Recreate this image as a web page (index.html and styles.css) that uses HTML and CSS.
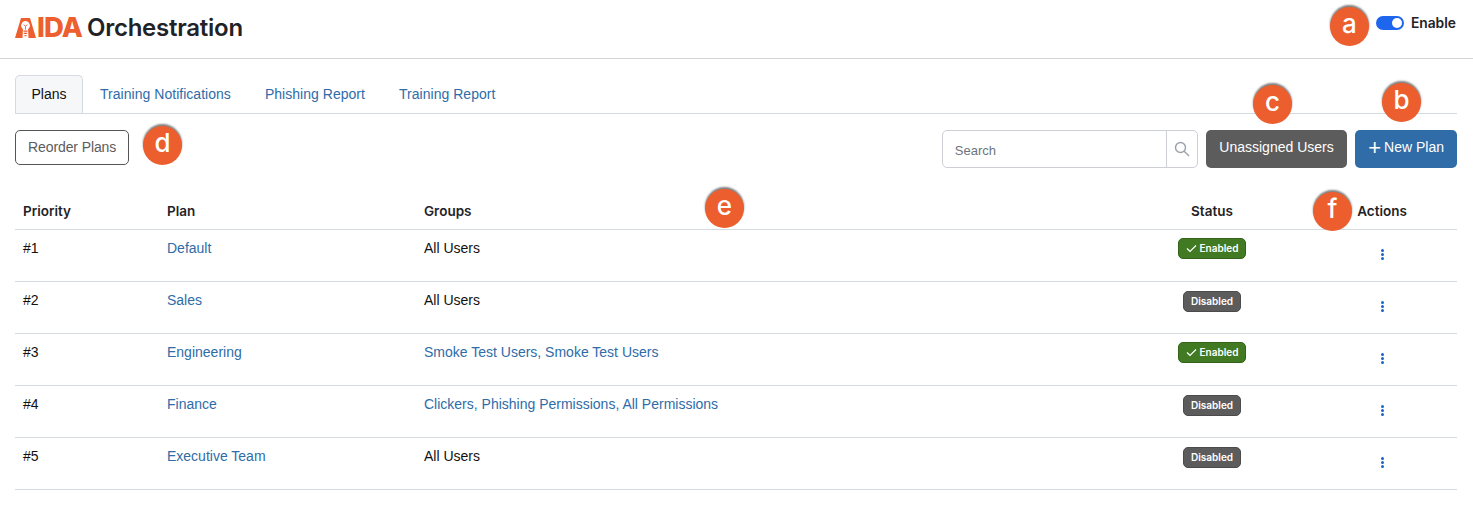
FILE: index.html
```html
<!DOCTYPE html>
<html lang="en">
<head>
    <meta charset="UTF-8">
    <title>AIDA Orchestration</title>
    <link rel="stylesheet" href="styles.css">
</head>
<body>
<div class="header">
    <div class="brand">
        <svg class="logo-mark" width="21" height="20" viewBox="0 0 21 20">
            <path fill="#ee5f2f" d="M6 0 H15 L21 20 H0 Z"/>
            <circle cx="10.500" cy="7.500" r="4.400" fill="#fff"/>
            <path fill="#fff" d="M8 10 H13 L13.500 20 H7.500 Z"/>
            <path fill="none" stroke="#ee5f2f" stroke-width="0.900" d="M8.800 6.500 L10.500 8.500 L12.200 6.500 M10.500 8.500 V11.500"/>
            <path fill="#ee5f2f" d="M8.500 12.500 H12.500 V13.700 H8.500 Z M8.800 14.800 H12.200 V16 H8.800 Z M9.500 17 H11.500 V18.200 H9.500 Z"/>
        </svg>
        <span class="logo-text">IDA</span>
        <span class="brand-name">Orchestration</span>
    </div>
    <div class="header-right">
        <span class="callout callout-a">a</span>
        <span class="switch"></span>
        <span class="switch-label">Enable</span>
    </div>
</div>

<div class="content">
    <div class="tabs">
        <a href="#" class="tab active">Plans</a>
        <a href="#" class="tab">Training Notifications</a>
        <a href="#" class="tab">Phishing Report</a>
        <a href="#" class="tab">Training Report</a>
        <span class="callout callout-c">c</span>
        <span class="callout callout-b">b</span>
    </div>

    <div class="toolbar">
        <div class="toolbar-left">
            <a href="#" class="btn btn-outline">Reorder Plans</a>
            <span class="callout callout-d">d</span>
        </div>
        <div class="toolbar-right">
            <div class="search">
                <input type="text" placeholder="Search">
                <span class="search-btn">
                    <svg width="16" height="16" viewBox="0 0 16 16" fill="none" stroke="#9aa1a8" stroke-width="1.400">
                        <circle cx="6.500" cy="6.500" r="5"/>
                        <path d="M10.200 10.200 L15 15"/>
                    </svg>
                </span>
            </div>
            <a href="#" class="btn btn-grey">Unassigned Users</a>
            <a href="#" class="btn btn-blue"><span class="plus">+</span>New Plan</a>
        </div>
    </div>

    <div class="table-wrap">
        <span class="callout callout-e">e</span>
        <span class="callout callout-f">f</span>
        <table>
            <thead>
                <tr>
                    <th class="col-priority">Priority</th>
                    <th class="col-plan">Plan</th>
                    <th>Groups</th>
                    <th class="col-status">Status</th>
                    <th class="col-actions">Actions</th>
                </tr>
            </thead>
            <tbody>
                <tr>
                    <td>#1</td>
                    <td><a href="#">Default</a></td>
                    <td>All Users</td>
                    <td class="col-status"><span class="badge badge-on"><svg width="11" height="9" viewBox="0 0 11 9" fill="none" stroke="#fff" stroke-width="1.200"><path d="M1 4.500 L4 7.500 L10 1.500"/></svg>Enabled</span></td>
                    <td class="col-actions"><span class="dots"><i></i><i></i><i></i></span></td>
                </tr>
                <tr>
                    <td>#2</td>
                    <td><a href="#">Sales</a></td>
                    <td>All Users</td>
                    <td class="col-status"><span class="badge badge-off">Disabled</span></td>
                    <td class="col-actions"><span class="dots"><i></i><i></i><i></i></span></td>
                </tr>
                <tr>
                    <td>#3</td>
                    <td><a href="#">Engineering</a></td>
                    <td><a href="#">Smoke Test Users, Smoke Test Users</a></td>
                    <td class="col-status"><span class="badge badge-on"><svg width="11" height="9" viewBox="0 0 11 9" fill="none" stroke="#fff" stroke-width="1.200"><path d="M1 4.500 L4 7.500 L10 1.500"/></svg>Enabled</span></td>
                    <td class="col-actions"><span class="dots"><i></i><i></i><i></i></span></td>
                </tr>
                <tr>
                    <td>#4</td>
                    <td><a href="#">Finance</a></td>
                    <td><a href="#">Clickers, Phishing Permissions, All Permissions</a></td>
                    <td class="col-status"><span class="badge badge-off">Disabled</span></td>
                    <td class="col-actions"><span class="dots"><i></i><i></i><i></i></span></td>
                </tr>
                <tr>
                    <td>#5</td>
                    <td><a href="#">Executive Team</a></td>
                    <td>All Users</td>
                    <td class="col-status"><span class="badge badge-off">Disabled</span></td>
                    <td class="col-actions"><span class="dots"><i></i><i></i><i></i></span></td>
                </tr>
            </tbody>
        </table>
    </div>
</div>
</body>
</html>
```

FILE: styles.css
```css
body {
    font-family: "Liberation Sans", Arial, sans-serif;
    font-size: 14px;
    color: #111;
    background-color: #fff;
    margin: 0;
}
a {
    color: #2f6ca8;
    text-decoration: none;
}
.header {
    height: 58px;
    padding: 0 17px 0 15px;
    border-bottom: 1px solid #d4d4d4;
    display: flex;
    justify-content: space-between;
    align-items: center;
}
.brand {
    display: flex;
    align-items: center;
    margin-bottom: 4px;
}
.logo-mark {
    margin-top: 2px;
}
.logo-text {
    font-family: Inter, sans-serif;
    font-size: 27.500px;
    font-weight: 800;
    letter-spacing: -0.9px;
    line-height: 24px;
    color: #ee5f2f;
    margin-left: 1px;
    margin-right: 5px;
}
.brand-name {
    font-family: Inter, sans-serif;
    font-size: 24px;
    font-weight: 600;
    letter-spacing: -0.25px;
    color: #1f2327;
}
.header-right {
    display: flex;
    align-items: center;
    position: relative;
    margin-bottom: 13px;
}
.switch {
    width: 28px;
    height: 14px;
    border-radius: 7px;
    background: #1f66ee;
    position: relative;
    margin-right: 7px;
}
.switch::after {
    content: "";
    position: absolute;
    right: 2px;
    top: 2px;
    width: 10px;
    height: 10px;
    border-radius: 50%;
    background: #fff;
}
.switch-label {
    font-family: Inter, sans-serif;
    font-size: 13.800px;
    font-weight: 600;
    color: #1f2327;
}
.callout {
    position: absolute;
    width: 39px;
    height: 39px;
    border-radius: 50%;
    background: #ec5e2e;
    box-shadow: 0 -2px 2px rgba(0, 0, 0, 0.5);
    color: #fff;
    font-family: Inter, sans-serif;
    font-size: 26px;
    font-weight: 500;
    line-height: 34px;
    text-align: center;
}
.callout-a { left: -46px; top: -8px; }
.callout-b { right: 36px; top: 8px; }
.callout-c { right: 165px; top: 10px; }
.callout-d { left: 128px; top: -4px; }
.callout-e { left: 690px; top: -3px; }
.callout-f { left: 1298px; top: 0; }
.content {
    padding: 16px 16px 0 15px;
}
.tabs {
    display: flex;
    height: 38px;
    border-bottom: 1px solid #d5dae0;
    position: relative;
}
.tab {
    padding: 11px 17px 0;
    line-height: 17px;
    font-size: 14px;
    letter-spacing: 0.03px;
}
.tab.active {
    color: #111;
    background: #f6f7f9;
    border: 1px solid #d5dae0;
    border-bottom: 0;
    border-radius: 5px 5px 0 0;
    padding: 10px 15.500px 0;
    letter-spacing: 0;
}
.toolbar {
    display: flex;
    justify-content: space-between;
    align-items: flex-start;
    margin-top: 16px;
}
.toolbar-left {
    position: relative;
}
.toolbar-right {
    display: flex;
    gap: 8px;
}
.btn {
    display: inline-block;
    border-radius: 5px;
    font-size: 14px;
    line-height: 17px;
}
.btn-outline {
    border: 1px solid #555;
    color: #5c5c5c;
    padding: 8px 12px;
    letter-spacing: -0.1px;
}
.btn-grey {
    background: #5c5c5c;
    color: #fff;
    padding: 9px 13.500px 12px;
}
.btn-blue {
    background: #2f6ca8;
    color: #fff;
    padding: 9px 13px 12px;
    display: flex;
    align-items: center;
}
.plus {
    font-size: 22px;
    line-height: 17px;
    margin-right: 3px;
}
.search {
    display: flex;
    width: 256px;
    height: 38px;
    box-sizing: border-box;
    border: 1px solid #ccd0d5;
    border-radius: 5px;
}
.search input {
    flex: 1;
    min-width: 0;
    border: 0;
    outline: 0;
    background: transparent;
    padding: 2px 12px 0;
    font-family: "Liberation Sans", Arial, sans-serif;
    font-size: 13px;
}
.search input::placeholder {
    color: #6c757d;
}
.search-btn {
    width: 30px;
    border-left: 1px solid #ccd0d5;
    display: flex;
    align-items: center;
    justify-content: center;
}
.table-wrap {
    position: relative;
    margin-top: 24px;
}
table {
    width: 100%;
    border-collapse: collapse;
    table-layout: fixed;
}
th {
    font-family: Inter, sans-serif;
    font-size: 13.500px;
    font-weight: 600;
    color: #1f2327;
    text-align: left;
    height: 37px;
    padding: 2px 7px 0;
    border-bottom: 1px solid #d5dae0;
    box-sizing: border-box;
}
td {
    height: 52px;
    padding: 10px 7px 0;
    vertical-align: top;
    border-bottom: 1px solid #d5dae0;
    box-sizing: border-box;
    line-height: 17px;
}
th:first-child, td:first-child {
    padding-left: 8px;
}
th.col-priority { width: 145px; }
th.col-plan { width: 257px; }
th.col-status { width: 190px; }
th.col-actions { width: 150px; }
.col-status, th.col-status, .col-actions, th.col-actions {
    text-align: center;
}
td.col-status {
    padding-top: 8px;
}
td.col-actions {
    padding-top: 9px;
}
.badge {
    display: inline-flex;
    align-items: center;
    gap: 3px;
    height: 21px;
    box-sizing: border-box;
    padding: 0 7px;
    border-radius: 5px;
    color: #fff;
    font-family: Inter, sans-serif;
    font-size: 10px;
    font-weight: 600;
}
.badge-on {
    background: #417a22;
    border: 1px solid #33641a;
}
.badge-off {
    background: #5c5c5c;
    border: 1px solid #4b4b4b;
    margin-top: 1px;
}
.dots {
    display: inline-flex;
    flex-direction: column;
    gap: 1px;
}
.dots i {
    width: 3px;
    height: 3px;
    border-radius: 50%;
    background: #1a66c0;
}
```
